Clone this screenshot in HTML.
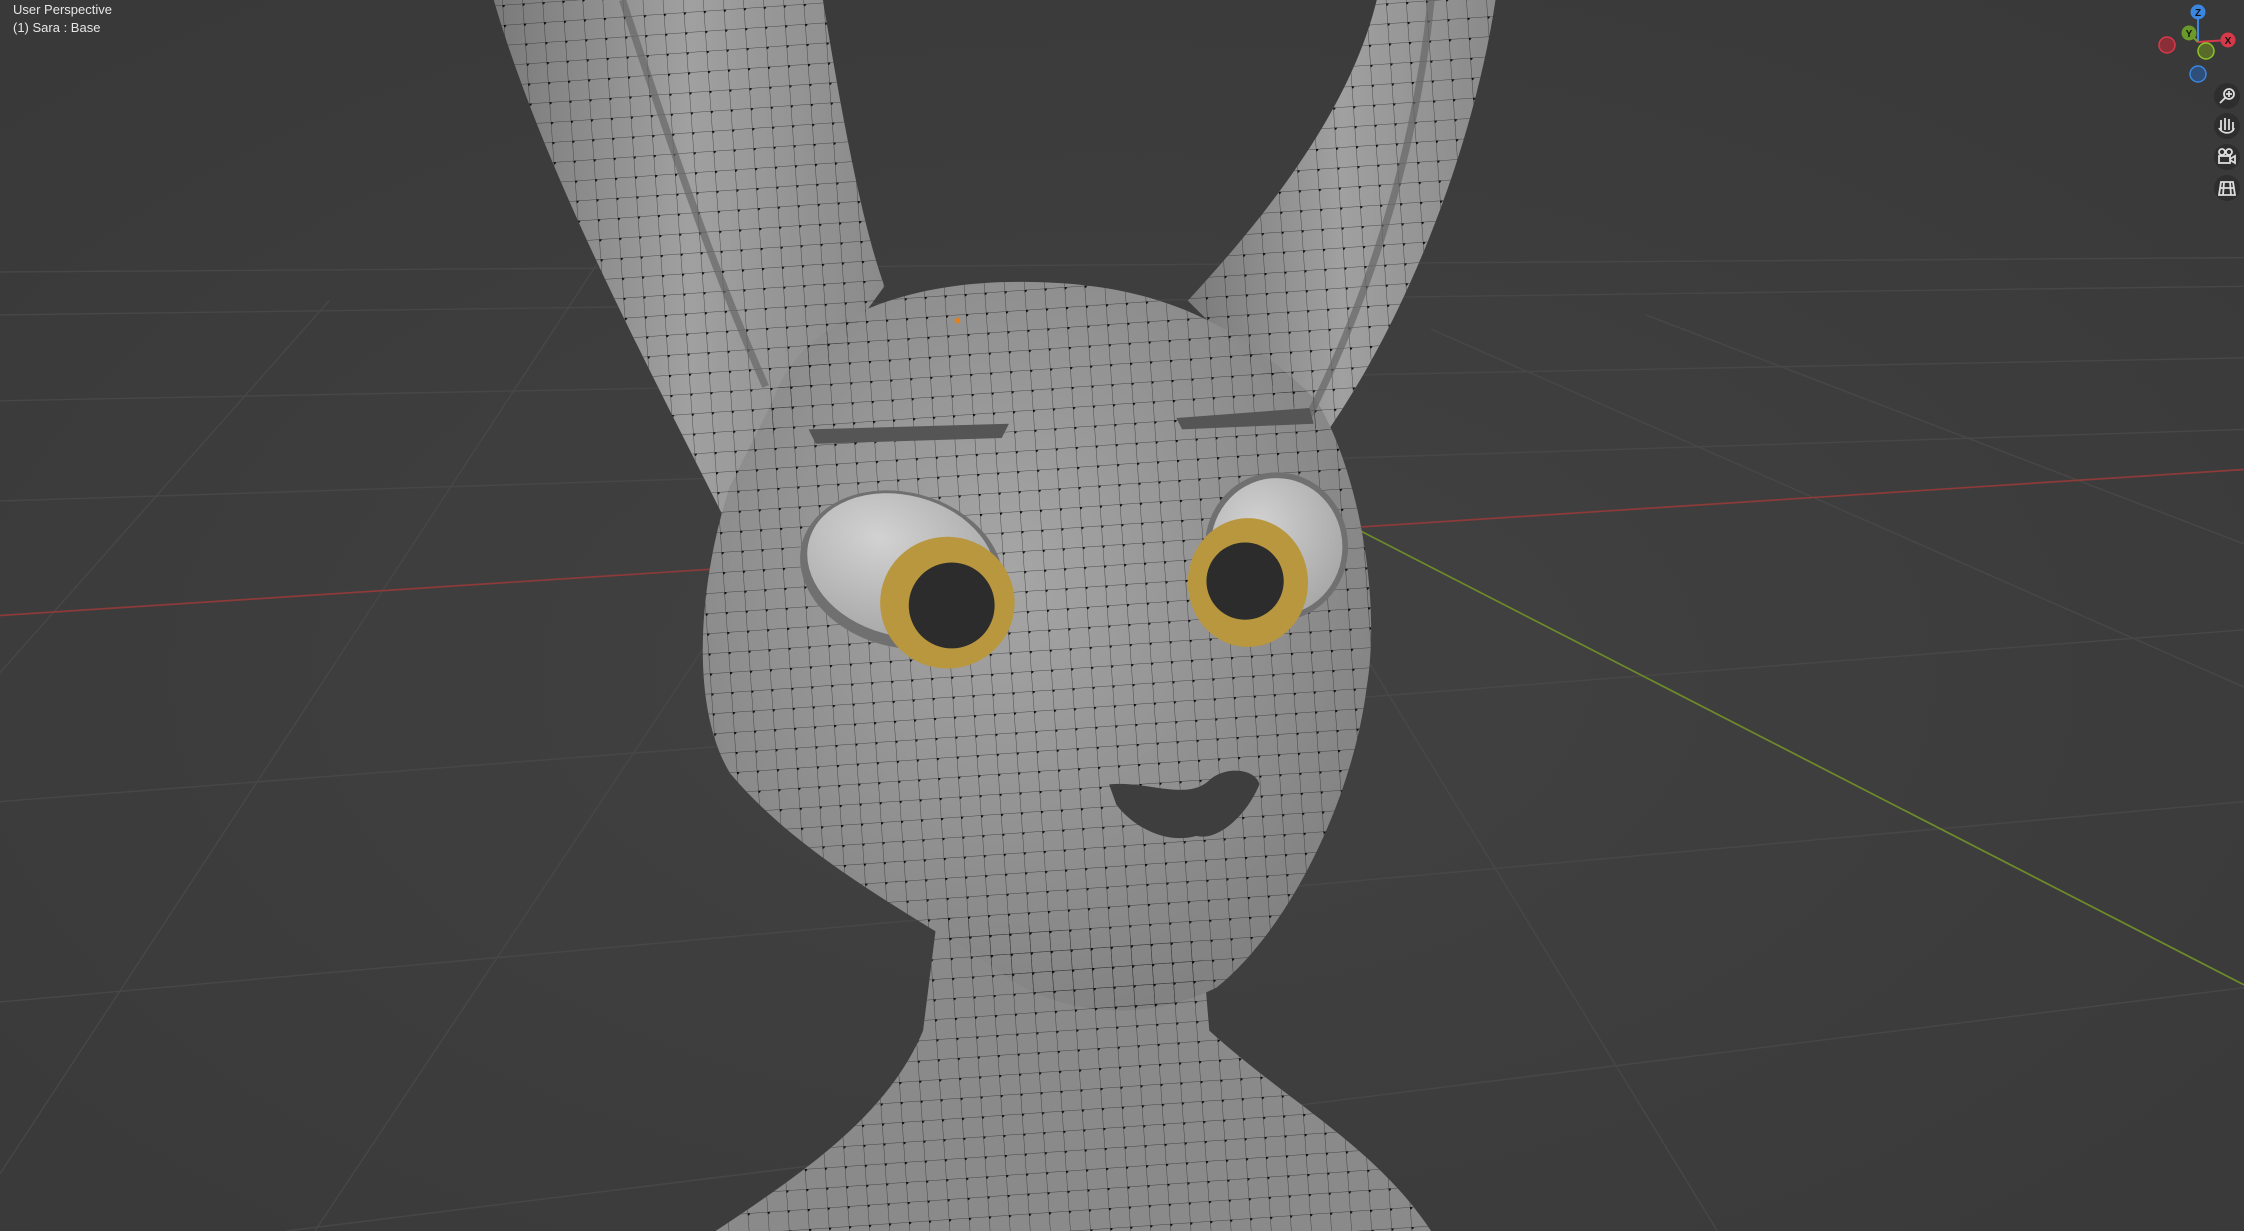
<!DOCTYPE html>
<html><head><meta charset="utf-8"><style>
html,body{margin:0;padding:0;background:#3d3d3d;overflow:hidden}
#w{position:relative;width:2244px;height:1231px;background:#3d3d3d}
svg{position:absolute;left:0;top:0}
.t{position:absolute;left:13px;color:#e6e6e6;font:13px "Liberation Sans",sans-serif}
</style></head><body><div id="w">
<svg width="2244" height="1231" viewBox="0 0 1568 860" preserveAspectRatio="none">
<defs>
<radialGradient id="bg" cx="0.5" cy="0.55" r="0.7"><stop offset="0" stop-color="#424242"/><stop offset="1" stop-color="#393939"/></radialGradient>
<pattern id="mesh" width="14" height="14" patternUnits="userSpaceOnUse" patternTransform="rotate(-4)">
<path d="M0 0H14M0 0V14" stroke="#2a2a2a" stroke-width="0.7" opacity="0.7"/>
<circle cx="0" cy="0" r="1.7" fill="#0e0e0e"/>
</pattern>
<radialGradient id="skin" cx="0.45" cy="0.4" r="0.7"><stop offset="0" stop-color="#a6a6a6"/><stop offset="1" stop-color="#7e7e7e"/></radialGradient>
<linearGradient id="earL" x1="0" y1="0" x2="1" y2="0"><stop offset="0" stop-color="#7a7a7a"/><stop offset="0.5" stop-color="#a0a0a0"/><stop offset="1" stop-color="#8a8a8a"/></linearGradient>
<radialGradient id="scl" cx="0.35" cy="0.35" r="0.7"><stop offset="0" stop-color="#d2d2d2"/><stop offset="1" stop-color="#a9a9a9"/></radialGradient>
</defs>
<rect width="1568" height="860" fill="url(#bg)"/>
<g stroke="#4a4a4a" stroke-width="1" opacity="0.8">
<path d="M0 560L1568 440M0 700L1568 560M200 860L1568 690M0 350L1568 300M0 280L1568 250M0 220L1568 200M0 190L1568 180"/>
<path d="M0 820L420 180M220 860L640 230M1200 860L820 240M1568 480L1000 230M1568 380L1150 220M0 470L230 210"/>
</g>
<path d="M0 430L1568 328" stroke="#8c3a3a" stroke-width="1.2"/>
<path d="M945 368L1568 688" stroke="#6e8a2a" stroke-width="1.2"/>
<g>
<path d="M345 0L575 0C585 60 600 150 618 200L545 300C515 320 510 340 505 360C450 250 380 120 345 0Z" fill="url(#earL)"/>
<path d="M962 0L1045 0C1030 100 985 220 925 305L830 210C895 140 945 70 962 0Z" fill="url(#earL)"/>
<path d="M655 640L645 720C620 780 560 820 500 860L1000 860C960 800 900 770 845 720L840 660Z" fill="#8a8a8a"/>
<path d="M540 280C560 220 640 195 720 197C800 198 860 220 920 280C950 330 965 420 955 480C945 560 900 650 850 690C800 715 740 710 700 680C640 640 560 600 510 540C480 490 490 400 510 340Z" fill="url(#skin)"/>
</g>
<g fill="url(#mesh)">
<path d="M345 0L575 0C585 60 600 150 618 200L545 300C515 320 510 340 505 360C450 250 380 120 345 0Z"/>
<path d="M962 0L1045 0C1030 100 985 220 925 305L830 210C895 140 945 70 962 0Z"/>
<path d="M655 640L645 720C620 780 560 820 500 860L1000 860C960 800 900 770 845 720L840 660Z"/>
<path d="M540 280C560 220 640 195 720 197C800 198 860 220 920 280C950 330 965 420 955 480C945 560 900 650 850 690C800 715 740 710 700 680C640 640 560 600 510 540C480 490 490 400 510 340Z"/>
</g>
<path d="M435 0C465 90 495 180 535 270" stroke="#666" stroke-width="5" fill="none" opacity="0.7"/>
<path d="M1000 0C990 100 960 200 915 290" stroke="#666" stroke-width="5" fill="none" opacity="0.7"/>
<path d="M565 300L705 296L700 306L570 310Z" fill="#555"/>
<path d="M822 292L915 285L918 296L826 300Z" fill="#555"/>
<ellipse cx="630" cy="398" rx="72" ry="54" transform="rotate(15 630 398)" fill="#707070"/>
<ellipse cx="630" cy="395" rx="67" ry="49" transform="rotate(15 630 395)" fill="url(#scl)"/>
<ellipse cx="662" cy="421" rx="47" ry="46" fill="#b8973f"/>
<circle cx="665" cy="423" r="30" fill="#2c2c2c"/>
<ellipse cx="892" cy="382" rx="50" ry="52" fill="#707070"/>
<ellipse cx="892" cy="382" rx="46" ry="48" fill="url(#scl)"/>
<ellipse cx="872" cy="407" rx="42" ry="45" fill="#b8973f"/>
<circle cx="870" cy="406" r="27" fill="#2c2c2c"/>
<path d="M775 548C800 545 830 560 845 545C858 534 878 538 880 548C872 568 852 588 836 584C815 590 792 578 780 562Z" fill="#3e3e3e"/>
<circle cx="669" cy="224" r="2" fill="#e08020"/>
</svg>
<svg width="2244" height="1231" viewBox="0 0 2244 1231">
<path d="M2198 42V12" stroke="#3a86e0" stroke-width="2"/>
<path d="M2198 42L2228 40" stroke="#d63a4a" stroke-width="2"/>
<path d="M2198 42L2189 33" stroke="#7aa02a" stroke-width="2"/>
<circle cx="2167" cy="45" r="8" fill="#8a2e38" stroke="#d63a4a" stroke-width="1.5"/>
<circle cx="2198" cy="74" r="8" fill="#2d4f7a" stroke="#3a86e0" stroke-width="1.5"/>
<circle cx="2206" cy="51" r="8" fill="#5a6a2a" stroke="#8ac42a" stroke-width="1.5"/>
<circle cx="2189" cy="33" r="7.5" fill="#6a9a2a"/>
<circle cx="2228" cy="40" r="7.5" fill="#d63a4a"/>
<circle cx="2198" cy="12" r="7.5" fill="#3a86e0"/>
<g font-family="Liberation Sans" font-weight="bold" font-size="10" text-anchor="middle" fill="#111">
<text x="2189" y="37">Y</text><text x="2228" y="44">X</text><text x="2198" y="16">Z</text></g>
<g fill="#2e2e2e"><circle cx="2227" cy="96" r="13"/><circle cx="2227" cy="126" r="13"/><circle cx="2227" cy="157" r="13"/><circle cx="2227" cy="188" r="13"/></g>
<g stroke="#ddd" stroke-width="1.8" fill="none">
<circle cx="2229" cy="94" r="5"/><path d="M2225 98L2220 103M2229 91V97M2226 94H2232"/>
<path d="M2221 130V120M2225 130V118M2229 130V119M2233 131V122M2219 128C2222 134 2232 135 2234 128"/>
<rect x="2219" y="156" width="11" height="7"/><circle cx="2222" cy="152" r="3"/><circle cx="2229" cy="152" r="3"/><path d="M2230 159L2235 156V163L2230 160"/>
<path d="M2219 195L2221 182H2233L2235 195ZM2220 188H2234M2224 182L2223 195M2230 182L2231 195"/>
</g>
</svg>
<div class="t" style="top:2px">User Perspective</div>
<div class="t" style="top:20px">(1) Sara : Base</div>
</div></body></html>
